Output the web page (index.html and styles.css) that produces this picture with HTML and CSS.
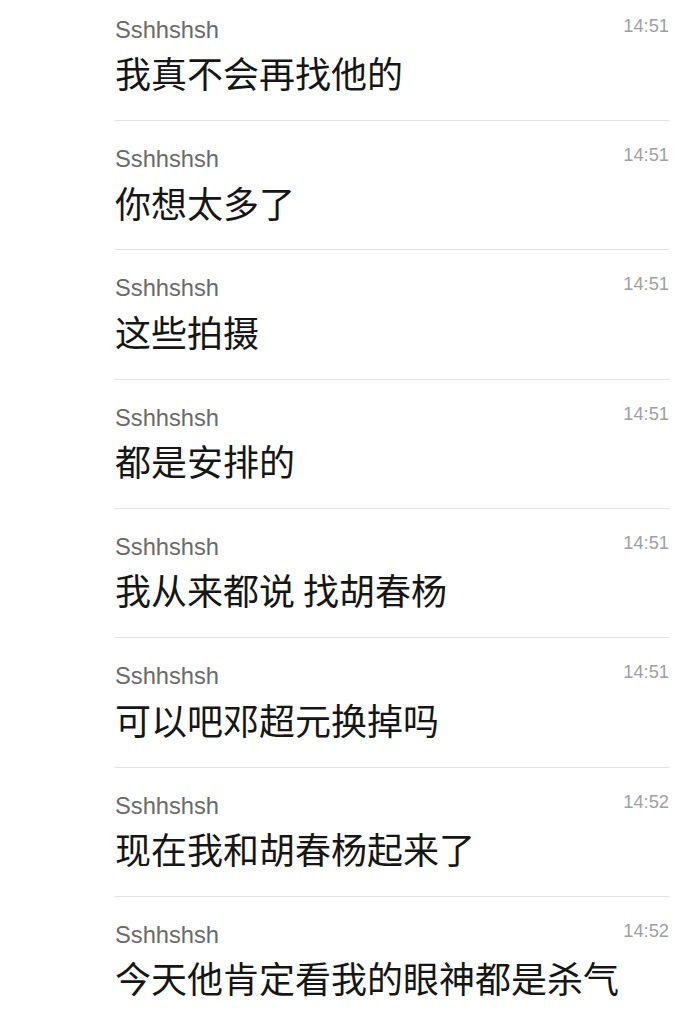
FILE: index.html
```html
<!DOCTYPE html>
<html>
<head>
    <meta charset="utf-8">
    <title>消息</title>
    <link rel="stylesheet" href="styles.css">
</head>
<body>
    <div class="list">
        <div class="row">
            <div class="head"><span class="name">Sshhshsh</span><span class="time">14:51</span></div>
            <div class="msg">我真不会再找他的</div>
        </div>
        <div class="row">
            <div class="head"><span class="name">Sshhshsh</span><span class="time">14:51</span></div>
            <div class="msg">你想太多了</div>
        </div>
        <div class="row">
            <div class="head"><span class="name">Sshhshsh</span><span class="time">14:51</span></div>
            <div class="msg">这些拍摄</div>
        </div>
        <div class="row">
            <div class="head"><span class="name">Sshhshsh</span><span class="time">14:51</span></div>
            <div class="msg">都是安排的</div>
        </div>
        <div class="row">
            <div class="head"><span class="name">Sshhshsh</span><span class="time">14:51</span></div>
            <div class="msg">我从来都说 找胡春杨</div>
        </div>
        <div class="row">
            <div class="head"><span class="name">Sshhshsh</span><span class="time">14:51</span></div>
            <div class="msg">可以吧邓超元换掉吗</div>
        </div>
        <div class="row">
            <div class="head"><span class="name">Sshhshsh</span><span class="time">14:52</span></div>
            <div class="msg">现在我和胡春杨起来了</div>
        </div>
        <div class="row">
            <div class="head"><span class="name">Sshhshsh</span><span class="time">14:52</span></div>
            <div class="msg">今天他肯定看我的眼神都是杀气</div>
        </div>
    </div>
</body>
</html>
```

FILE: styles.css
```css
html, body {
    margin: 0;
    padding: 0;
    background: #fff;
    overflow: hidden;
}
.list {
    margin-top: -8.33px;
    padding-left: 115px;
    padding-right: 31px;
}
.row {
    box-sizing: border-box;
    height: 129.33px;
    padding-top: 24px;
    border-bottom: 1px solid #e2e2e2;
}
.head {
    display: flex;
    justify-content: space-between;
    align-items: flex-start;
}
.name {
    font-family: "Liberation Sans", Arial, sans-serif;
    font-size: 23.7px;
    line-height: 28px;
    color: #6a6a6a;
}
.time {
    font-family: "Liberation Sans", Arial, sans-serif;
    font-size: 18.3px;
    line-height: 20px;
    color: #a0a0a0;
}
.msg {
    margin-top: 10.5px;
    font-family: "Noto Sans CJK SC", "Noto Sans", sans-serif;
    font-size: 36px;
    line-height: 36px;
    color: #161616;
    white-space: nowrap;
}
```
